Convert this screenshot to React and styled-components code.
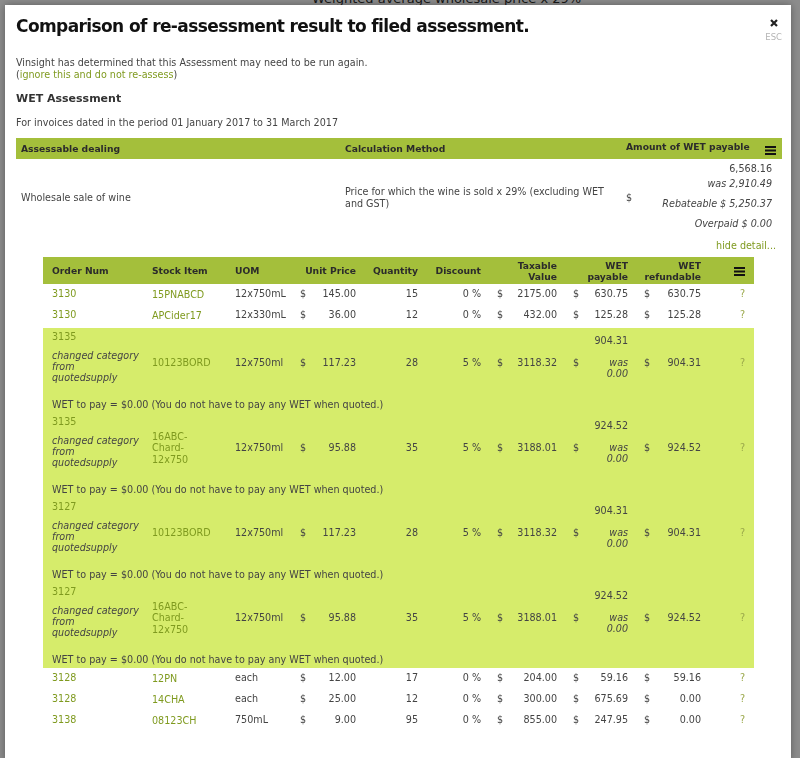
import React from 'react'
import styled, { createGlobalStyle } from 'styled-components'

const GREEN = '#a4bf3b'
const HIGHLIGHT = '#d6ec6b'
const LINK = '#7f9a1f'

const GlobalStyle = createGlobalStyle`
  html, body {
    margin: 0;
    padding: 0;
    height: 100%;
    overflow: hidden;
  }
  body {
    background: #fff;
    font-family: "DejaVu Sans", Verdana, sans-serif;
    color: #444;
  }
  table {
    font-size: inherit;
  }
`

const Page = styled.div`
  height: 100vh;
  padding-left: 312px;
  font-size: 13px;
  line-height: 16px;
  color: #2e2e2e;
`

const PageHeading = styled.div`
  margin-top: -9px;
`

const Overlay = styled.div`
  position: fixed;
  inset: 0;
  background: rgba(0, 0, 0, 0.45);
  padding: 5px 9px 0 5px;
  overflow: hidden;
`

const Modal = styled.div`
  background: #fff;
  padding: 10px 9px 30px 11px;
  box-shadow: 0 0 8px rgba(0, 0, 0, 0.35);
`

const Header = styled.div`
  display: flex;
  justify-content: space-between;
  align-items: flex-start;
  height: 22px;
`

const Title = styled.h1`
  margin: 0;
  font-size: 17px;
  line-height: 22px;
  font-weight: bold;
  letter-spacing: -0.6px;
  color: #111;
`

const Close = styled.div`
  display: flex;
  flex-direction: column;
  align-items: center;
  padding-top: 4px;
  cursor: pointer;
`

const Esc = styled.span`
  margin-top: 6px;
  font-size: 8.5px;
  line-height: 9px;
  color: #b5b5b5;
`

const Intro = styled.p`
  margin: 20px 0 0;
  font-size: 9.6px;
  line-height: 12px;
`

const Link = styled.a`
  color: ${LINK};
  text-decoration: none;
  cursor: pointer;
`

const SectionTitle = styled.h2`
  margin: 11px 0 0;
  font-size: 11px;
  line-height: 14px;
  font-weight: bold;
  color: #333;
`

const Period = styled.p`
  margin: 11px 0 0;
  font-size: 9.6px;
  line-height: 12px;
`

const SummaryTable = styled.table`
  width: 100%;
  margin-top: 9px;
  border-collapse: collapse;
  table-layout: fixed;
  font-size: 9.6px;
  line-height: 12px;
`

const GreenRow = styled.tr`
  height: ${p => p.$h}px;
  background: ${GREEN};
`

const HeadCell = styled.th`
  padding: ${p => (p.$raised ? '2.5px 6px 0 5px' : '5px 5px 0')};
  vertical-align: top;
  text-align: left;
  font-size: 9.2px;
  font-weight: bold;
  color: #2b2b2b;
`

const HeadFlex = styled.div`
  display: flex;
  justify-content: space-between;
  align-items: flex-start;
`

const MenuIcon = styled.svg`
  display: block;
  margin-top: ${p => p.$offset || 0}px;
`

const BodyCell = styled.td`
  padding: 0 ${p => p.$right || 5}px 0 5px;
  vertical-align: middle;
`

const AmountCell = styled.td`
  padding: 3.7px 10px 7.4px 0;
  vertical-align: top;
  text-align: right;
`

const AmountLine = styled.div`
  margin-top: ${p => p.$gap || 0}px;
  font-style: ${p => (p.$italic ? 'italic' : 'normal')};
`

const ToggleCell = styled.td`
  padding: 3px 6px 0 0;
  text-align: right;
`

const DetailCell = styled.td`
  padding: 4.5px 28px 0 27px;
`

const DetailTable = styled.table`
  width: 100%;
  border-collapse: collapse;
  table-layout: fixed;
  font-size: 9.6px;
  line-height: 12px;
`

const DTh = styled.th`
  text-align: ${p => p.$align};
  padding: 1px ${p => (p.$align === 'right' ? p.$pad : 0)}px 0
    ${p => (p.$align === 'left' ? p.$pad : 0)}px;
  vertical-align: middle;
  font-size: 9.2px;
  line-height: 11px;
  font-weight: bold;
  color: #2b2b2b;
`

const DTd = styled.td`
  text-align: ${p => p.$align};
  padding: ${p => (p.$top != null ? p.$top : 0)}px
    ${p => (p.$align === 'right' ? p.$pad : 0)}px 0
    ${p => (p.$align === 'left' ? p.$pad : 0)}px;
  vertical-align: ${p => (p.$top != null ? 'top' : 'middle')};
  color: #444;
`

const DataRow = styled.tr`
  height: ${p => p.$h}px;
  background: ${p => (p.$hl ? HIGHLIGHT : 'transparent')};
`

const Gap = styled.tr`
  height: 2px;
`

const NoteCell = styled.td`
  padding: 0.7px 0 2.3px 9px;
  color: #444;
`

const Stock = styled.span`
  display: block;
  max-width: 62px;
  line-height: 11.5px;
`

const Changed = styled.div`
  margin-top: 7.7px;
  max-width: 88px;
  line-height: 11px;
  font-style: italic;
  color: #444;
`

const Was = styled.div`
  margin-top: 10.2px;
  line-height: 11px;
  font-style: italic;
`

const Help = styled.span`
  color: #9aa84a;
`

const COLS = [
  { w: 104, align: 'left', pad: 9 },
  { w: 83, align: 'left', pad: 5 },
  { w: 65, align: 'left', pad: 5 },
  { w: 15, align: 'left', pad: 5 },
  { w: 51, align: 'right', pad: 5 },
  { w: 62, align: 'right', pad: 5 },
  { w: 63, align: 'right', pad: 5 },
  { w: 21, align: 'left', pad: 11 },
  { w: 55, align: 'right', pad: 5 },
  { w: 21, align: 'left', pad: 11 },
  { w: 50, align: 'right', pad: 5 },
  { w: 21, align: 'left', pad: 11 },
  { w: 52, align: 'right', pad: 5 },
  { w: 48, align: 'right', pad: 9 }
]

const c = i => ({ $align: COLS[i].align, $pad: COLS[i].pad })

const topRows = [
  ['3130', '15PNABCD', '12x750mL', '145.00', '15', '0', '2175.00', '630.75', '630.75'],
  ['3130', 'APCider17', '12x330mL', '36.00', '12', '0', '432.00', '125.28', '125.28']
]

const quotedRows = [
  ['3135', '10123BORD', '12x750ml', '117.23', '28', '5', '3118.32', '904.31', '904.31'],
  ['3135', '16ABC-Chard-12x750', '12x750ml', '95.88', '35', '5', '3188.01', '924.52', '924.52'],
  ['3127', '10123BORD', '12x750ml', '117.23', '28', '5', '3118.32', '904.31', '904.31'],
  ['3127', '16ABC-Chard-12x750', '12x750ml', '95.88', '35', '5', '3188.01', '924.52', '924.52']
]

const bottomRows = [
  ['3128', '12PN', 'each', '12.00', '17', '0', '204.00', '59.16', '59.16'],
  ['3128', '14CHA', 'each', '25.00', '12', '0', '300.00', '675.69', '0.00'],
  ['3138', '08123CH', '750mL', '9.00', '95', '0', '855.00', '247.95', '0.00']
]

const Hamburger = ({ offset }) => (
  <MenuIcon $offset={offset} width="11" height="9" viewBox="0 0 11 9">
    <rect x="0" y="0" width="11" height="2" fill="#111" />
    <rect x="0" y="3.5" width="11" height="2" fill="#111" />
    <rect x="0" y="7" width="11" height="2" fill="#111" />
  </MenuIcon>
)

const MiddleCells = ({ row }) => (
  <>
    <DTd {...c(1)}>
      <Link><Stock>{row[1]}</Stock></Link>
    </DTd>
    <DTd {...c(2)}>{row[2]}</DTd>
    <DTd {...c(3)}>$</DTd>
    <DTd {...c(4)}>{row[3]}</DTd>
    <DTd {...c(5)}>{row[4]}</DTd>
    <DTd {...c(6)}>{row[5]} %</DTd>
    <DTd {...c(7)}>$</DTd>
    <DTd {...c(8)}>{row[6]}</DTd>
    <DTd {...c(9)}>$</DTd>
  </>
)

const TailCells = ({ row }) => (
  <>
    <DTd {...c(11)}>$</DTd>
    <DTd {...c(12)}>{row[8]}</DTd>
    <DTd {...c(13)}><Help>?</Help></DTd>
  </>
)

const PlainRow = ({ row }) => (
  <DataRow $h={21}>
    <DTd {...c(0)}><Link>{row[0]}</Link></DTd>
    <MiddleCells row={row} />
    <DTd {...c(10)}>{row[7]}</DTd>
    <TailCells row={row} />
  </DataRow>
)

const QuotedGroup = ({ row }) => (
  <>
    <DataRow $h={70} $hl>
      <DTd {...c(0)} $top={2.7}>
        <Link>{row[0]}</Link>
        <Changed>changed category from quotedsupply</Changed>
      </DTd>
      <MiddleCells row={row} />
      <DTd {...c(10)} $top={7.4}>
        <div>{row[7]}</div>
        <Was>was<br />0.00</Was>
      </DTd>
      <TailCells row={row} />
    </DataRow>
    <DataRow $hl>
      <NoteCell colSpan={14}>
        WET to pay = $0.00 (You do not have to pay any WET when quoted.)
      </NoteCell>
    </DataRow>
  </>
)

const Detail = () => (
  <DetailTable>
    <colgroup>
      {COLS.map((col, i) => (
        <col key={i} style={{ width: col.w }} />
      ))}
    </colgroup>
    <thead>
      <GreenRow $h={27}>
        <DTh {...c(0)}>Order Num</DTh>
        <DTh {...c(1)}>Stock Item</DTh>
        <DTh {...c(2)}>UOM</DTh>
        <DTh colSpan={2} {...c(4)}>Unit Price</DTh>
        <DTh {...c(5)}>Quantity</DTh>
        <DTh {...c(6)}>Discount</DTh>
        <DTh colSpan={2} {...c(8)}>Taxable<br />Value</DTh>
        <DTh colSpan={2} {...c(10)}>WET<br />payable</DTh>
        <DTh colSpan={2} {...c(12)}>WET<br />refundable</DTh>
        <DTh {...c(13)}>
          <HeadFlex style={{ justifyContent: 'flex-end' }}>
            <Hamburger offset={2} />
          </HeadFlex>
        </DTh>
      </GreenRow>
    </thead>
    <tbody>
      {topRows.map((r, i) => <PlainRow key={`t${i}`} row={r} />)}
      <Gap><td colSpan={14} /></Gap>
      {quotedRows.map((r, i) => <QuotedGroup key={`q${i}`} row={r} />)}
      {bottomRows.map((r, i) => <PlainRow key={`b${i}`} row={r} />)}
    </tbody>
  </DetailTable>
)

export default function App() {
  return (
    <>
      <GlobalStyle />
      <Page>
        <PageHeading>Weighted average wholesale price x 29%</PageHeading>
      </Page>
      <Overlay>
        <Modal>
          <Header>
            <Title>Comparison of re-assessment result to filed assessment.</Title>
            <Close>
              <svg width="8" height="8" viewBox="0 0 8 8">
                <path d="M1 1 L7 7 M7 1 L1 7" stroke="#222" strokeWidth="2.2" />
              </svg>
              <Esc>ESC</Esc>
            </Close>
          </Header>
          <Intro>
            Vinsight has determined that this Assessment may need to be run again.
            <br />
            (<Link>ignore this and do not re-assess</Link>)
          </Intro>
          <SectionTitle>WET Assessment</SectionTitle>
          <Period>For invoices dated in the period 01 January 2017 to 31 March 2017</Period>
          <SummaryTable>
            <colgroup>
              <col style={{ width: 324 }} />
              <col style={{ width: 281 }} />
              <col style={{ width: 19 }} />
              <col />
            </colgroup>
            <thead>
              <GreenRow $h={21}>
                <HeadCell>Assessable dealing</HeadCell>
                <HeadCell>Calculation Method</HeadCell>
                <HeadCell colSpan={2} $raised>
                  <HeadFlex>
                    <span>Amount of WET payable</span>
                    <Hamburger offset={5} />
                  </HeadFlex>
                </HeadCell>
              </GreenRow>
            </thead>
            <tbody>
              <tr>
                <BodyCell>Wholesale sale of wine</BodyCell>
                <BodyCell $right={10}>
                  Price for which the wine is sold x 29% (excluding WET and GST)
                </BodyCell>
                <BodyCell>$</BodyCell>
                <AmountCell>
                  <AmountLine>6,568.16</AmountLine>
                  <AmountLine $italic $gap={3}>was 2,910.49</AmountLine>
                  <AmountLine $italic $gap={8.5}>Rebateable $ 5,250.37</AmountLine>
                  <AmountLine $italic $gap={7.8}>Overpaid $ 0.00</AmountLine>
                </AmountCell>
              </tr>
              <tr>
                <ToggleCell colSpan={4}>
                  <Link>hide detail...</Link>
                </ToggleCell>
              </tr>
              <tr>
                <DetailCell colSpan={4}>
                  <Detail />
                </DetailCell>
              </tr>
            </tbody>
          </SummaryTable>
        </Modal>
      </Overlay>
    </>
  )
}
